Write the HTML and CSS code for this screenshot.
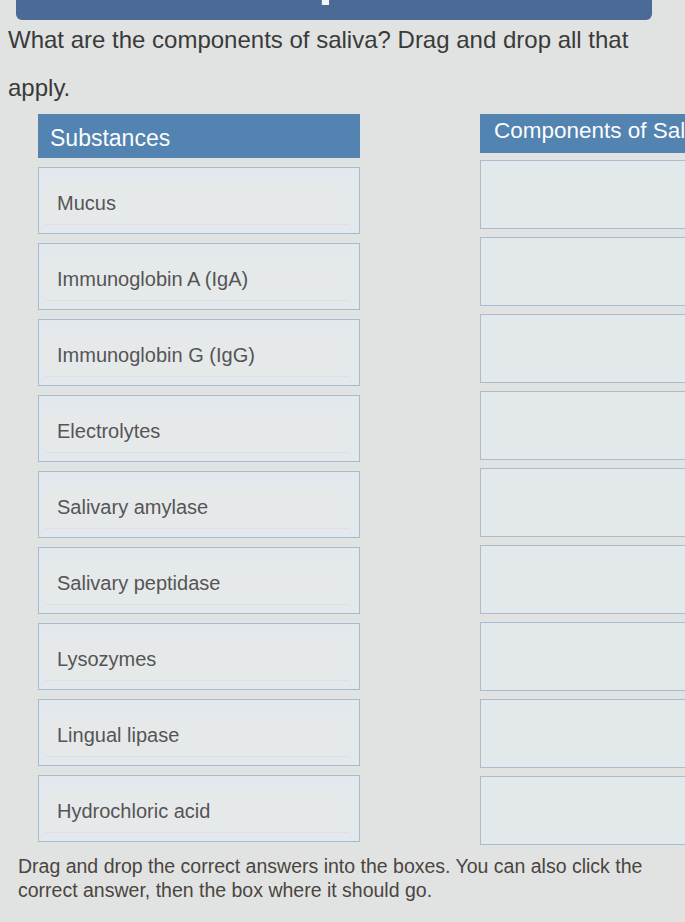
FILE: index.html
```html
<!DOCTYPE html>
<html lang="en">
<head>
    <meta charset="UTF-8">
    <meta name="viewport" content="width=device-width, initial-scale=1.0">
    <title>Saliva Components</title>
    <link rel="stylesheet" href="styles.css">
</head>
<body>
    <!-- Title banner, scrolled mostly out of view -->
    <div class="banner">
        <h1>Saliva Components</h1>
    </div>

    <p class="question">What are the components of saliva? Drag and drop all that apply.</p>

    <div class="board">
        <div class="column" id="source-column">
            <div class="col-header">Substances</div>
            <div class="item"><div class="item-inner">Mucus</div></div>
            <div class="item"><div class="item-inner">Immunoglobin A (IgA)</div></div>
            <div class="item"><div class="item-inner">Immunoglobin G (IgG)</div></div>
            <div class="item"><div class="item-inner">Electrolytes</div></div>
            <div class="item"><div class="item-inner">Salivary amylase</div></div>
            <div class="item"><div class="item-inner">Salivary peptidase</div></div>
            <div class="item"><div class="item-inner">Lysozymes</div></div>
            <div class="item"><div class="item-inner">Lingual lipase</div></div>
            <div class="item"><div class="item-inner">Hydrochloric acid</div></div>
        </div>
        <div class="column" id="target-column">
            <div class="col-header">Components of Saliva</div>
            <div class="drop"></div>
            <div class="drop"></div>
            <div class="drop"></div>
            <div class="drop"></div>
            <div class="drop"></div>
            <div class="drop"></div>
            <div class="drop"></div>
            <div class="drop"></div>
            <div class="drop"></div>
        </div>
    </div>

    <p class="hint">Drag and drop the correct answers into the boxes. You can also click the correct answer, then the box where it should go.</p>
</body>
</html>
```

FILE: styles.css
```css
body {
    margin: 0;
    padding: 0;
    background-color: #e1e3e2;
    font-family: "Liberation Sans", Arial, sans-serif;
    color: #3c3c3c;
    overflow: hidden;
}

/* Title banner (only its bottom edge shows) */
.banner {
    margin: -40px 0 0 16px;
    width: 636px;
    height: 60px;
    background-color: #4b6b96;
    border-radius: 0 0 6px 6px;
    overflow: hidden;
}

.banner h1 {
    margin: 0;
    padding: 0 0 0 22px;
    font-size: 52px;
    line-height: 60px;
    color: #f2f4f6;
    transform: translateY(-14px);
}

.question {
    margin: -4px 0 0 8px;
    width: 640px;
    font-size: 24px;
    line-height: 48px;
    color: #3a3a3a;
}

/* Two columns: substances and drop targets */
.board {
    display: flex;
    gap: 120px;
    margin: 2px 0 0 38px;
}

.column {
    flex: 0 0 322px;
    display: flex;
    flex-direction: column;
}

.col-header {
    height: 44px;
    line-height: 48px;
    padding-left: 12px;
    background-color: #5283b1;
    color: #fbfcfd;
    font-size: 23px;
    white-space: nowrap;
    overflow: hidden;
    margin-bottom: 9px;
}

#target-column .col-header {
    height: 39px;
    line-height: 34px;
    padding-left: 14px;
    font-size: 22.5px;
    margin-bottom: 7px;
}

.item {
    height: 67px;
    margin-bottom: 9px;
    border: 1px solid #a7bccb;
    background-color: #e2e8eb;
    box-sizing: border-box;
    padding: 15px 10px 9px 6px;
}

.item-inner {
    height: 100%;
    padding-left: 12px;
    display: flex;
    align-items: center;
    background-color: #e6e9ea;
    border-bottom: 1px dotted #d5dadc;
    font-size: 20px;
    color: #555;
}

.drop {
    height: 69px;
    margin-bottom: 8px;
    border: 1px solid #a9bccb;
    border-right: none;
    background-color: #e3e8eb;
    box-sizing: border-box;
}

.hint {
    margin: 1px 0 0 18px;
    width: 660px;
    font-size: 19.5px;
    line-height: 24px;
    color: #4a4540;
}
```
